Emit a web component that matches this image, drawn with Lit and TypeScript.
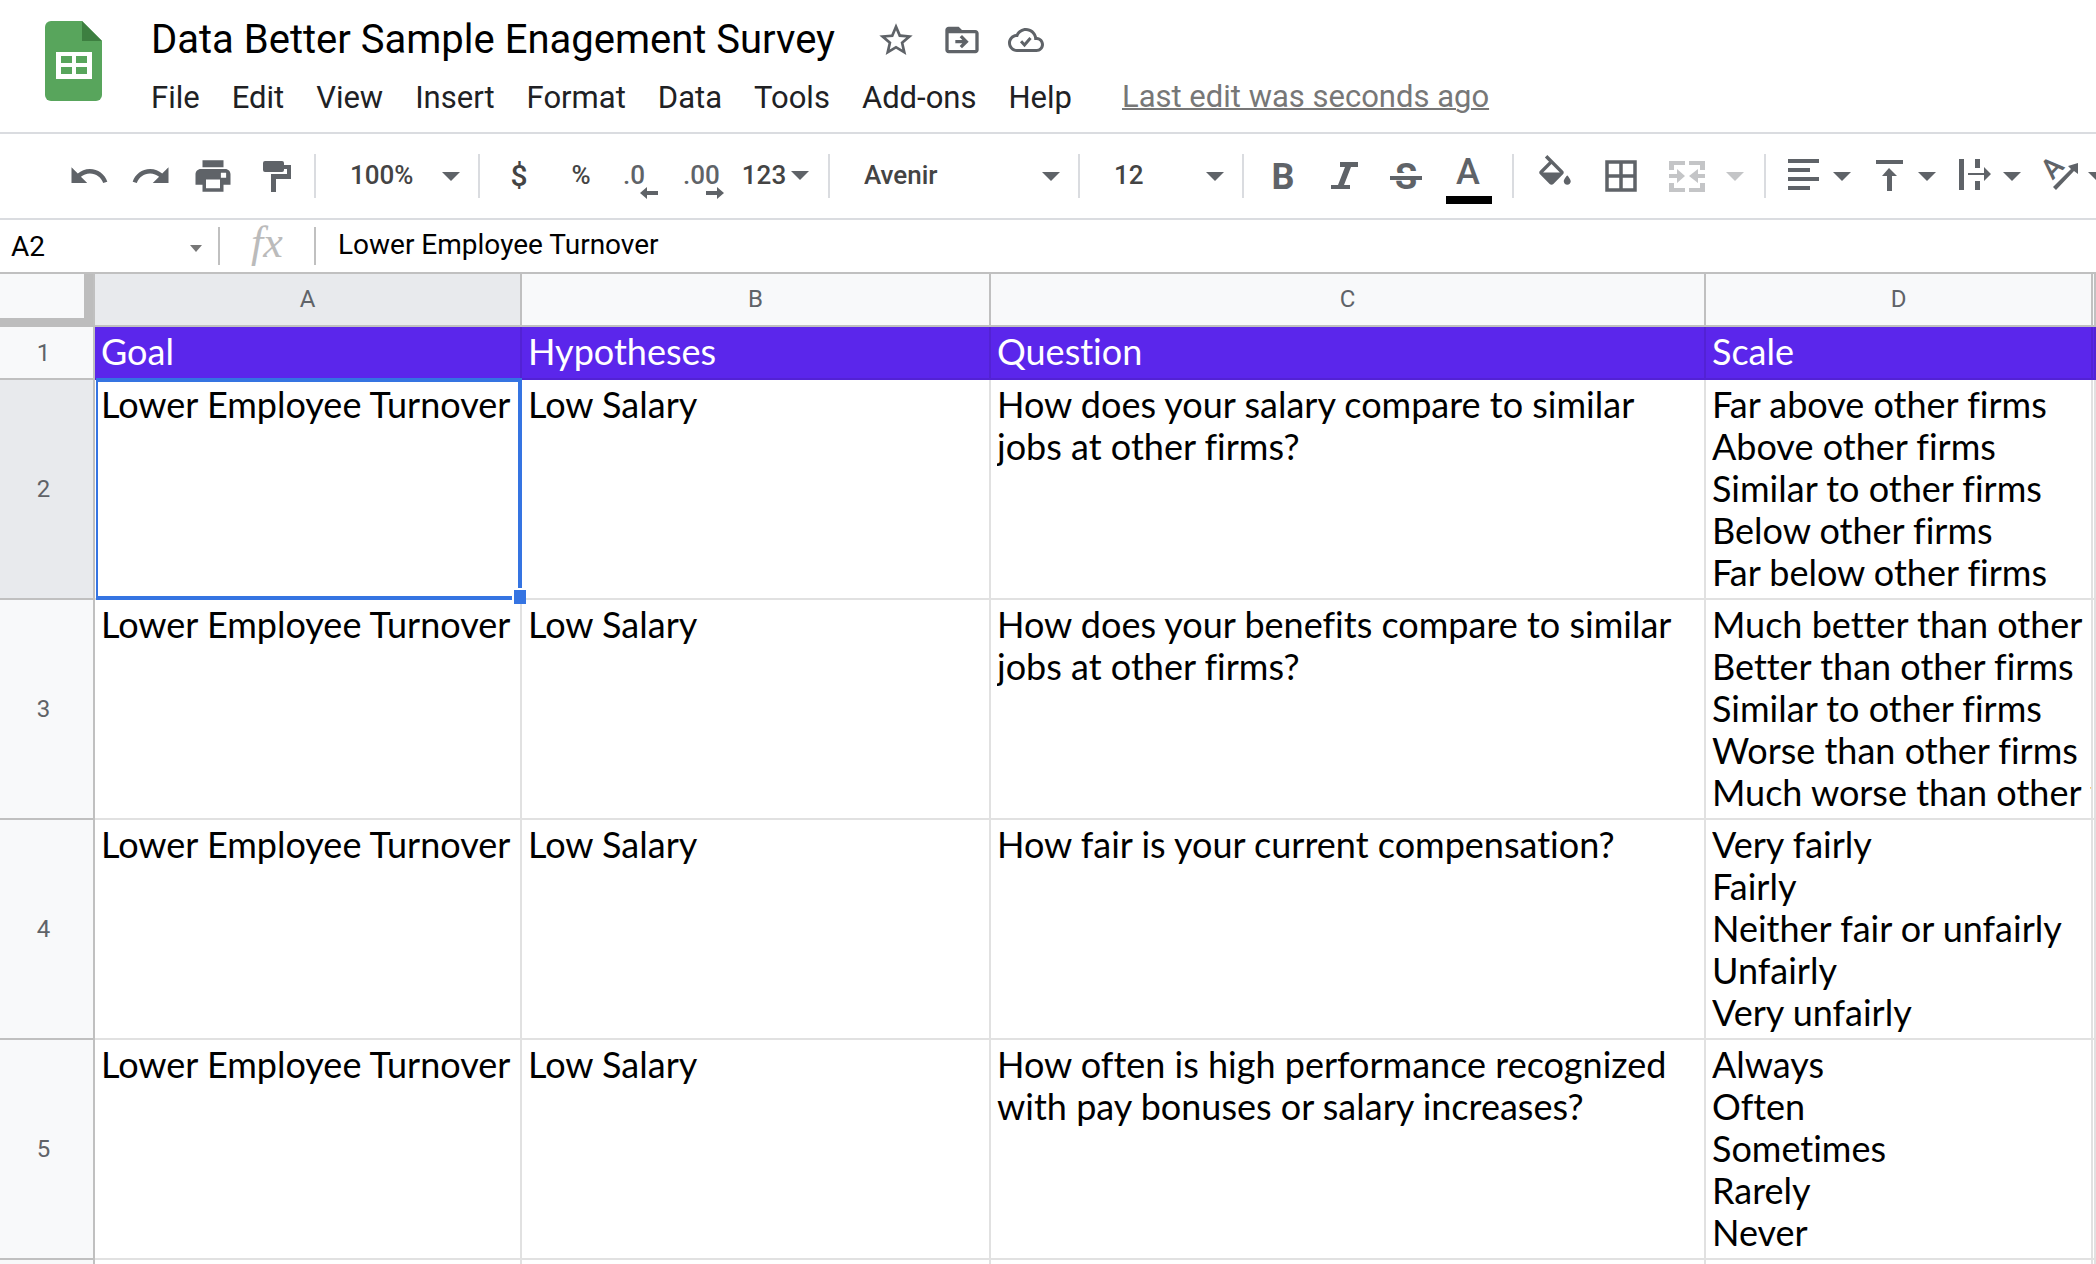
import { LitElement, html, svg, css, nothing, type TemplateResult } from "lit";
import { customElement, property, state } from "lit/decorators.js";
import { classMap } from "lit/directives/class-map.js";

const ICONS: Record<string, TemplateResult> = {
  undo: svg`<path d="M12.5 8c-2.65 0-5.05.99-6.9 2.6L2 7v9h9l-3.62-3.62c1.39-1.16 3.16-1.88 5.12-1.88 3.54 0 6.55 2.31 7.6 5.5l2.37-.78C21.08 11.03 17.15 8 12.5 8z"/>`,
  redo: svg`<path d="M18.4 10.6C16.55 8.99 14.15 8 11.5 8c-4.65 0-8.58 3.03-9.96 7.22L3.9 16c1.05-3.19 4.05-5.5 7.6-5.5 1.95 0 3.73.72 5.12 1.88L13 16h9V7l-3.6 3.6z"/>`,
  print: svg`<path d="M19 8H5c-1.66 0-3 1.34-3 3v6h4v4h12v-4h4v-6c0-1.66-1.34-3-3-3zm-3 11H8v-5h8v5zm3.5-6h-3v-2.800h3v2.800zM18 3H6v4h12V3z" fill-rule="evenodd"/>`,
  star: svg`<path d="M22 9.24l-7.19-.62L12 2 9.19 8.63 2 9.24l5.46 4.73L5.82 21 12 17.27 18.18 21l-1.63-7.03L22 9.24zM12 15.4l-3.76 2.27 1-4.28-3.32-2.88 4.38-.38L12 6.1l1.71 4.04 4.38.38-3.32 2.88 1 4.28L12 15.4z"/>`,
  move: svg`<path d="M20 6h-8l-2-2H4c-1.1 0-2 .9-2 2v12c0 1.1.9 2 2 2h16c1.1 0 2-.9 2-2V8c0-1.1-.9-2-2-2zm0 12H4V8h16v10z"/><path d="M8 12h4.2l-1.6-1.6L12 9l4 4-4 4-1.4-1.4 1.6-1.6H8z"/>`,
  cloud: svg`<path d="M19.35 10.04C18.67 6.59 15.64 4 12 4 9.11 4 6.6 5.64 5.35 8.04 2.34 8.36 0 10.91 0 14c0 3.31 2.69 6 6 6h13c2.76 0 5-2.24 5-5 0-2.64-2.05-4.78-4.65-4.96zM19 18H6c-2.21 0-4-1.79-4-4s1.79-4 4-4h.71C7.37 7.69 9.48 6 12 6c3.04 0 5.5 2.46 5.5 5.5v.5H19c1.66 0 3 1.34 3 3s-1.34 3-3 3z"/><path d="M8.7 12.8l2.3 2.5 4-4.6" fill="none" stroke="currentColor" stroke-width="2"/>`,
  fill: svg`<path d="M16.56 8.94L7.62 0 6.21 1.41l2.38 2.38-5.15 5.15c-.59.59-.59 1.54 0 2.12l5.5 5.5c.29.29.68.44 1.06.44s.77-.15 1.06-.44l5.5-5.5c.59-.58.59-1.53 0-2.12zM5.21 10L10 5.21 14.79 10H5.21zM19 11.5s-2 2.17-2 3.5c0 1.1.9 2 2 2s2-.9 2-2c0-1.33-2-3.5-2-3.5z"/>`,
  borders: svg`<path d="M3 3v18h18V3H3zm8 16H5v-6h6v6zm0-8H5V5h6v6zm8 8h-6v-6h6v6zm0-8h-6V5h6v6z"/>`,
};

/* Icons drawn on a 42-unit grid, one unit to a pixel. */
const WIDE_ICONS: Record<string, TemplateResult> = {
  paint: svg`<path d="M11 6h17a2 2 0 0 1 2 2v2h7v14H22v13h-5V19h16v-5h-3v1a2 2 0 0 1-2 2H11a2 2 0 0 1-2-2V8a2 2 0 0 1 2-2z"/>`,
  lessDecimals: svg`<text x="1" y="29" class="digits">.0</text><path d="M18 38l7-6v4h11v4H25v4z"/>`,
  moreDecimals: svg`<text x="-1" y="29" class="digits">.00</text><path d="M40 38l-7-6v4H22v4h11v4z"/>`,
  bold: svg`<text x="21" y="34" text-anchor="middle" class="heavy">B</text>`,
  italic: svg`<path d="M16 7h18v5h-7l-7 18h6v4H7v-4h7l7-18h-5z"/>`,
  strike: svg`<text x="20" y="34" text-anchor="middle" class="heavy">S</text><path d="M3 18h34v7H3z" fill="#fff"/><path d="M4 21h32v4H4z"/>`,
  textColor: svg`<text x="18" y="29" text-anchor="middle" class="medium">A</text><path d="M-4 41h46v8H-4z" fill="#000"/>`,
  merge: svg`<path d="M3 6h16v4H8v5H3zM23 6h16v9h-5v-5H23zM3 28h5v5h11v4H3zM34 28h5v9H23v-4h11zM3 19h8v-5l8 7-8 7v-5H3zM39 19h-7v-5l-9 7 9 7v-5h7z"/>`,
  alignLeft: svg`<path d="M5 4h31v4H5zM5 13h22v4H5zM5 22h31v4H5zM5 31h22v4H5z"/>`,
  alignTop: svg`<path d="M8 5h27v4H8zM21 13l8 8h-5v15h-5V21h-5z"/>`,
  wrap: svg`<path d="M6 4h5v31H6zM22 4h5v9h-5zM22 26h5v9h-5zM15 18h16v-6l7 7-7 7v-6H15z"/>`,
  rotate: svg`<text transform="translate(21 19) rotate(-46)" text-anchor="middle" class="tilted">A</text><path d="M15 32l18-18-3-3 10-3v11l-4-3-18 19z"/>`,
};

@customElement("sheet-icon")
export class SheetIcon extends LitElement {
  @property() name = "";

  static styles = css`
    :host { display: block; flex: none; width: var(--icon-size, 42px); height: var(--icon-size, 42px); }
    svg { display: block; width: 100%; height: 100%; fill: currentColor; overflow: visible; }
    text { font-family: Roboto, "Liberation Sans", sans-serif; }
    .digits { font-size: 26px; font-weight: 500; }
    .heavy { font-size: 36px; font-weight: 700; }
    .medium { font-size: 36px; font-weight: 500; }
    .tilted { font-size: 28px; font-weight: 500; }
  `;

  render() {
    const wide = WIDE_ICONS[this.name];
    return html`<svg viewBox=${wide ? "0 0 42 42" : "0 0 24 24"} aria-hidden="true">${wide ?? ICONS[this.name] ?? nothing}</svg>`;
  }
}

interface Row {
  goal: string;
  hypothesis: string;
  question: string;
  scale: string[];
}

const GOAL = "Lower Employee Turnover";
const ROWS: Row[] = [
  {
    goal: GOAL, hypothesis: "Low Salary",
    question: "How does your salary compare to similar jobs at other firms?",
    scale: ["Far above other firms", "Above other firms", "Similar to other firms", "Below other firms", "Far below other firms"],
  },
  {
    goal: GOAL, hypothesis: "Low Salary",
    question: "How does your benefits compare to similar jobs at other firms?",
    scale: ["Much better than other firms", "Better than other firms", "Similar to other firms", "Worse than other firms", "Much worse than other firms"],
  },
  {
    goal: GOAL, hypothesis: "Low Salary",
    question: "How fair is your current compensation?",
    scale: ["Very fairly", "Fairly", "Neither fair or unfairly", "Unfairly", "Very unfairly"],
  },
  {
    goal: GOAL, hypothesis: "Low Salary",
    question: "How often is high performance recognized with pay bonuses or salary increases?",
    scale: ["Always", "Often", "Sometimes", "Rarely", "Never"],
  },
];

const MENUS = ["File", "Edit", "View", "Insert", "Format", "Data", "Tools", "Add-ons", "Help"];

@customElement("app-root")
export class AppRoot extends LitElement {
  @state() private selectedRow = 2;

  static styles = css`
    :host {
      display: flex; flex-direction: column; height: 100vh; overflow: hidden;
      background: #fff; color: #000;
      font-family: Roboto, "Liberation Sans", sans-serif;
    }
    * { box-sizing: border-box; }
    button, input, select {
      margin: 0; padding: 0; border: 0; background: none; color: inherit;
      font: inherit; appearance: none; border-radius: 0;
    }
    button { display: flex; align-items: center; justify-content: center; flex: none; white-space: nowrap; cursor: pointer; }

    .header { display: flex; flex: none; height: 134px; padding-left: 45px; border-bottom: 2px solid #dadce0; }
    .logo { flex: none; width: 57px; height: 80px; margin-top: 21px; }
    .heading { display: flex; flex-direction: column; padding-left: 33px; }
    .title-line { display: flex; align-items: center; height: 76px; padding: 4px 0 0 16px; }
    h1 { margin: 0; padding: 0 41px 1px 0; font-size: 40px; line-height: 48px; font-weight: 400; white-space: nowrap; }
    .title-icons { display: flex; gap: 26px; color: #5f6368; }
    .title-icons sheet-icon { --icon-size: 40px; }
    .title-icons .cloud { --icon-size: 36px; }
    .menus { display: flex; align-items: center; height: 43px; color: #202124; font-size: 31px; line-height: 42px; }
    .menus button { padding: 1px 16px 0; }
    .last-edit { padding: 0 0 2px 34px; color: #777; text-decoration: underline; text-decoration-thickness: 2px; white-space: nowrap; }

    .toolbar {
      display: flex; align-items: center; flex: none; height: 86px; padding-left: 58px; overflow: hidden;
      border-bottom: 2px solid #dadce0; color: #5f6368; font-size: 26px; font-weight: 500;
    }
    .toolbar button { width: 62px; height: 84px; }
    .toolbar .text { padding-bottom: 2px; color: #444; }
    .toolbar .dollar { font-size: 30px; }
    .toolbar .broad { width: 66px; }
    .toolbar .number { width: 84px; gap: 5px; padding-right: 5px; }
    .toolbar .menu { width: 85px; gap: 8px; }
    .toolbar .merge { width: 102px; gap: 18px; color: #c4c5c7; }
    .rule { flex: none; width: 2px; height: 44px; margin: 0 8px; background: #dadce0; }
    .pick { display: grid; flex: none; align-items: center; height: 84px; width: 146px; }
    .pick.font { width: 232px; }
    .pick > * { grid-area: 1 / 1; }
    .pick select { width: 100%; height: 100%; padding: 0 0 2px 26px; color: #444; font-weight: 500; }
    .pick .arrow { justify-self: end; margin-right: 10px; pointer-events: none; }
    .number .arrow, .pick .arrow { color: #5f6368; }
    .arrow { display: block; flex: none; width: 18px; height: 9px; fill: currentColor; }

    .formula { display: flex; align-items: center; flex: none; height: 54px; border-bottom: 2px solid #c0c0c0; font-size: 28px; }
    .name-box { display: flex; align-items: center; flex: none; width: 220px; padding: 0 16px 0 11px; height: 38px; border-right: 2px solid #c0c0c0; color: #777; }
    .name-box input { flex: 1; min-width: 0; color: #000; }
    .name-box .arrow { width: 12px; height: 7px; margin-top: 4px; }
    .fx { flex: none; width: 96px; height: 38px; border-right: 2px solid #c0c0c0; color: #bbb; text-align: center; font: italic 44px/32px "Liberation Serif", serif; }
    .formula > input { flex: 1; min-width: 0; height: 52px; padding: 0 22px 4px; }

    .grid { flex: 1; min-height: 0; overflow: hidden; }
    table { width: 100%; table-layout: fixed; border-collapse: separate; border-spacing: 0; }
    .col-index { width: 95px; } .col-a { width: 427px; } .col-b { width: 469px; } .col-c { width: 715px; } .col-d { width: 387px; }
    th { padding: 0; border: 0 solid #c0c0c0; border-width: 0 2px 2px 0; background: #f8f9fa; color: #5f6368; font-size: 24px; line-height: 28px; font-weight: 400; }
    thead th { height: 53px; padding-bottom: 2px; }
    tbody th { padding: 0 6px 0 0; }
    th.active { background: #e8eaed; }
    thead .corner { border-bottom-color: #bdbdbd; box-shadow: inset -9px -7px #bdbdbd; }
    td {
      height: 53px; padding: 3px 0 5px 6px; border: 0 solid #e1e1e1; border-width: 0 2px 2px 0; vertical-align: top;
      font-family: Lato, sans-serif; font-size: 36px; line-height: 42px; font-variant-ligatures: none;
    }
    .titles td { border-color: #5322d4; background: #5b26eb; color: #fff; }
    .clip { overflow: hidden; }
    .line { white-space: nowrap; }
    td.selected { position: relative; }
    .outline { position: absolute; inset: -2px -2px -2px 1px; border: 4px solid #3574e2; border-left-width: 2px; pointer-events: none; }
    .handle { position: absolute; right: -6px; bottom: -6px; width: 14px; height: 16px; border: 2px solid #fff; border-width: 2px 0 0 2px; background: #3574e2; }
  `;

  private arrow() {
    return html`<svg class="arrow" viewBox="0 0 18 9" preserveAspectRatio="none" aria-hidden="true"><path d="M0 0h18L9 9z"/></svg>`;
  }

  private tool(name: string, label: string, kind = "") {
    const menu = kind === "menu" || kind === "merge";
    return html`<button class=${kind} aria-label=${label}><sheet-icon name=${name}></sheet-icon>${menu ? this.arrow() : nothing}</button>`;
  }

  private pick(label: string, value: string, kind = "") {
    return html`<label class="pick ${kind}"><select aria-label=${label}><option>${value}</option></select>${this.arrow()}</label>`;
  }

  private row(row: Row, index: number) {
    const number = index + 2;
    const selected = number === this.selectedRow;
    return html`<tr>
      <th scope="row" class=${classMap({ active: selected })}>${number}</th>
      <td class=${classMap({ selected })} @click=${() => (this.selectedRow = number)}>
        <div class="clip line">${row.goal}</div>
        ${selected ? html`<div class="outline"></div><div class="handle"></div>` : nothing}
      </td>
      <td><div class="clip">${row.hypothesis}</div></td>
      <td><div class="clip">${row.question}</div></td>
      <td><div class="clip">${row.scale.map((item) => html`<div class="line">${item}</div>`)}</div></td>
      <td></td>
    </tr>`;
  }

  render() {
    const rule = html`<span class="rule"></span>`;
    return html`
      <header class="header">
        <svg class="logo" viewBox="0 0 57 80" role="img" aria-label="Sheets">
          <path d="M6 0h31l20 20v54a6 6 0 0 1-6 6H6a6 6 0 0 1-6-6V6a6 6 0 0 1 6-6z" fill="#58a55c"/>
          <path d="M37 0l20 20H37z" fill="#3d7f40"/>
          <path d="M11 31h36v27H11zM16 35v7h11v-7zM31 35v7h11v-7zM16 46v7h11v-7zM31 46v7h11v-7z" fill="#fff" fill-rule="evenodd"/>
        </svg>
        <div class="heading">
          <div class="title-line">
            <h1>Data Better Sample Enagement Survey</h1>
            <div class="title-icons">
              <button aria-label="Star"><sheet-icon name="star"></sheet-icon></button>
              <button aria-label="Move"><sheet-icon name="move"></sheet-icon></button>
              <button aria-label="Saved to cloud"><sheet-icon class="cloud" name="cloud"></sheet-icon></button>
            </div>
          </div>
          <nav class="menus">
            ${MENUS.map((name) => html`<button>${name}</button>`)}
            <a class="last-edit" href="#history">Last edit was seconds ago</a>
          </nav>
        </div>
      </header>

      <div class="toolbar" role="toolbar">
        ${this.tool("undo", "Undo")}${this.tool("redo", "Redo")}${this.tool("print", "Print")}${this.tool("paint", "Paint format")}
        ${rule}${this.pick("Zoom", "100%")}${rule}
        <button class="text dollar">$</button>
        <button class="text">%</button>
        ${this.tool("lessDecimals", "Decrease decimal places")}${this.tool("moreDecimals", "Increase decimal places")}
        <button class="text number">123${this.arrow()}</button>
        ${rule}${this.pick("Font", "Avenir", "font")}${rule}${this.pick("Font size", "12")}${rule}
        ${this.tool("bold", "Bold")}${this.tool("italic", "Italic")}${this.tool("strike", "Strikethrough")}${this.tool("textColor", "Text color", "broad")}
        ${rule}
        ${this.tool("fill", "Fill color", "broad")}${this.tool("borders", "Borders", "broad")}${this.tool("merge", "Merge cells", "merge")}
        ${rule}
        ${this.tool("alignLeft", "Horizontal align", "menu")}${this.tool("alignTop", "Vertical align", "menu")}${this.tool("wrap", "Text wrapping", "menu")}${this.tool("rotate", "Text rotation", "menu")}
      </div>

      <div class="formula">
        <label class="name-box"><input aria-label="Name box" .value=${`A${this.selectedRow}`} />${this.arrow()}</label>
        <span class="fx">fx</span>
        <input aria-label="Formula" .value=${ROWS[this.selectedRow - 2].goal} />
      </div>

      <div class="grid">
        <table>
          <colgroup><col class="col-index" /><col class="col-a" /><col class="col-b" /><col class="col-c" /><col class="col-d" /><col /></colgroup>
          <thead>
            <tr><th class="corner"></th><th class="active" scope="col">A</th><th scope="col">B</th><th scope="col">C</th><th scope="col">D</th><th></th></tr>
          </thead>
          <tbody>
            <tr class="titles"><th scope="row">1</th><td>Goal</td><td>Hypotheses</td><td>Question</td><td>Scale</td><td></td></tr>
            ${ROWS.map((row, index) => this.row(row, index))}
            <tr><th></th><td></td><td></td><td></td><td></td><td></td></tr>
          </tbody>
        </table>
      </div>
    `;
  }
}
